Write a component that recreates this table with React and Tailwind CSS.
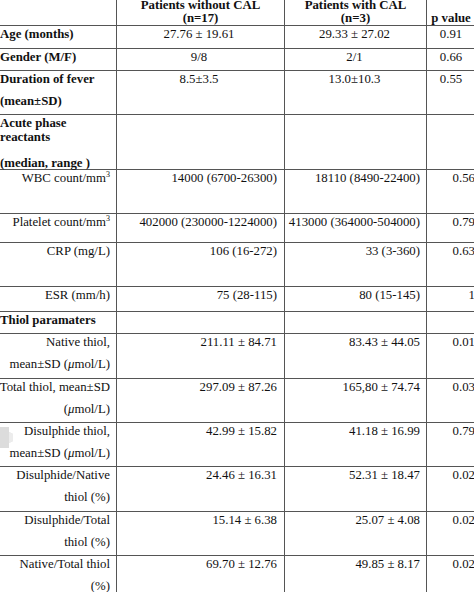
import React from "react";

const Mu = () => <i>μ</i>;
const Mm3 = () => (
  <>
    count/mm<sup className="-top-[5px] text-[8px]">3</sup>
  </>
);

// widths of the four columns (first one starts 4px off the left edge)
const cols = ["w-[121px]", "w-[168px]", "w-[142px]", "w-[53px]"];

const rows = [
  { h: "h-[23px]", bold: true, center: true, label: ["Age (months)"], v: ["27.76 ± 19.61", "29.33 ± 27.02", "0.91"] },
  { h: "h-[22px]", bold: true, center: true, label: ["Gender (M/F)"], v: ["9/8", "2/1", "0.66"] },
  { h: "h-[44px]", bold: true, center: true, label: ["Duration of fever", "(mean±SD)"], v: ["8.5±3.5", "13.0±10.3", "0.55"] },
  { h: "h-[55px]", bold: true, label: ["Acute phase", "reactants", "(median, range )"], gaps: ["", "", "mt-[12px]"], v: ["", "", ""] },
  { h: "h-[44px]", label: [<>WBC <Mm3 /></>], v: ["14000 (6700-26300)", "18110 (8490-22400)", "0.56"] },
  { h: "h-[29px]", label: [<>Platelet <Mm3 /></>], v: ["402000 (230000-1224000)", "413000 (364000-504000)", "0.79"] },
  { h: "h-[44px]", label: ["CRP (mg/L)"], v: ["106 (16-272)", "33 (3-360)", "0.63"] },
  { h: "h-[25px]", label: ["ESR (mm/h)"], v: ["75 (28-115)", "80 (15-145)", "1"] },
  { h: "h-[22px]", bold: true, label: ["Thiol paramaters"], v: ["", "", ""] },
  { h: "h-[45px]", label: ["Native thiol,", <>mean±SD (<Mu />mol/L)</>], v: ["211.11 ± 84.71", "83.43 ± 44.05", "0.01"] },
  { h: "h-[44px]", label: ["Total thiol, mean±SD", <>(<Mu />mol/L)</>], v: ["297.09 ± 87.26", "165,80 ± 74.74", "0.03"] },
  { h: "h-[44px]", label: ["Disulphide thiol,", <>mean±SD (<Mu />mol/L)</>], v: ["42.99 ± 15.82", "41.18 ± 16.99", "0.79"] },
  { h: "h-[45px]", label: ["Disulphide/Native", "thiol (%)"], v: ["24.46 ± 16.31", "52.31 ± 18.47", "0.02"] },
  { h: "h-[44px]", label: ["Disulphide/Total", "thiol (%)"], v: ["15.14 ± 6.38", "25.07 ± 4.08", "0.02"] },
  { h: "h-[48px]", label: ["Native/Total thiol", "(%)"], v: ["69.70 ± 12.76", "49.85 ± 8.17", "0.02"] },
];

const Lines = ({ lines, gaps, align }) => (
  <>
    {lines.map((l, i) => (
      <div
        key={i}
        className={`flex whitespace-nowrap leading-[14px] ${align} ${
          i === 0 ? "" : gaps ? gaps[i] || "" : "mt-[8px]"
        }`}
      >
        <span>{l}</span>
      </div>
    ))}
  </>
);

const Row = ({ row }) => {
  const valAlign = row.center ? "justify-center" : "justify-end";
  return (
    <div className={`flex border-b border-[#555] ${row.h}`}>
      <div className={`${cols[0]} shrink-0 border-r border-[#555] pl-[4px] pr-[6px] pt-[1px] ${row.bold ? "font-bold" : ""}`}>
        <Lines lines={row.label} gaps={row.gaps} align={row.bold ? "justify-start" : "justify-end"} />
      </div>
      <div className={`${cols[1]} shrink-0 border-r border-[#555] pl-[4px] pr-[7px] pt-[1px]`}>
        <Lines lines={[row.v[0]]} align={valAlign} />
      </div>
      <div className={`${cols[2]} shrink-0 border-r border-[#555] pl-[4px] pr-[6px] pt-[1px]`}>
        <Lines lines={[row.v[1]]} align={valAlign} />
      </div>
      <div className={`${cols[3]} shrink-0 pr-[5px] pt-[1px]`}>
        <Lines lines={[row.v[2]]} align={valAlign} />
      </div>
    </div>
  );
};

export default function App() {
  return (
    <div className="relative h-[592px] w-[474px] overflow-hidden bg-white text-[12.8px] text-[#111] [font-family:'Liberation_Serif','Times_New_Roman',serif]">
      <div className="-ml-[4px] w-[484px]">
        {/* header */}
        <div className="flex h-[26px] border-b border-[#555] font-bold leading-[13px]">
          <div className={`${cols[0]} shrink-0 border-r border-[#555]`} />
          <div className={`${cols[1]} flex shrink-0 flex-col items-center justify-end border-r border-[#555]`}>
            <div>Patients without CAL</div>
            <div>(n=17)</div>
          </div>
          <div className={`${cols[2]} flex shrink-0 flex-col items-center justify-end border-r border-[#555]`}>
            <div>Patients with CAL</div>
            <div>(n=3)</div>
          </div>
          <div className={`${cols[3]} flex shrink-0 flex-col items-center justify-end pr-[5px] whitespace-nowrap`}>
            <div>p value</div>
          </div>
        </div>
        {rows.map((r, i) => (
          <Row key={i} row={r} />
        ))}
      </div>

      {/* grey scrap on the left edge */}
      <svg className="absolute left-0 top-[427px]" width="14" height="21" viewBox="0 0 14 21">
        <polygon points="0,0 9,0 9,5 13,7 13,14 9,16 9,21 0,21" fill="#dcdcdc" />
        <polygon points="9,5 13,7 13,14 9,16" fill="#ececec" />
      </svg>
    </div>
  );
}
